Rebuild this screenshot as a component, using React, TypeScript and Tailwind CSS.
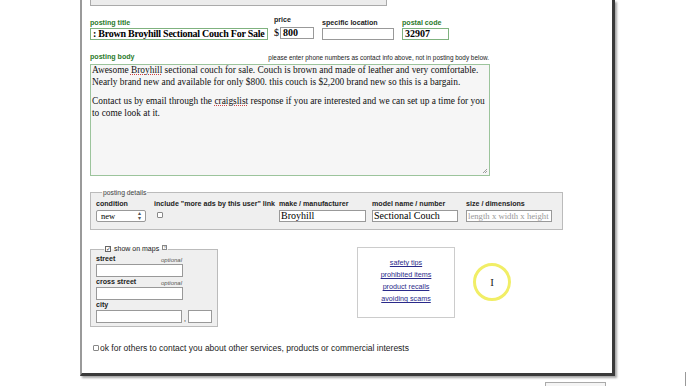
import React from "react";

const sans = { fontFamily: '"Liberation Sans", Arial, sans-serif' };
const serif = { fontFamily: '"Liberation Serif", "Times New Roman", serif' };

function Label({ children, green }: { children: React.ReactNode; green?: boolean }) {
  return (
    <div
      className={`text-[7.1px] font-bold leading-[9px] whitespace-nowrap ${green ? "text-[#2a7a2a]" : "text-[#222]"}`}
      style={sans}
    >
      {children}
    </div>
  );
}

function Box({
  w,
  green,
  children,
  cls = "",
  size = "text-[10px]",
  h = "h-[12px]",
}: {
  w: string;
  green?: boolean;
  children?: React.ReactNode;
  cls?: string;
  size?: string;
  h?: string;
}) {
  return (
    <div
      className={`${w} ${h} ${size} border ${green ? "border-[#7fb27f]" : "border-[#999]"} bg-white flex items-center leading-none overflow-hidden whitespace-nowrap ${cls}`}
      style={serif}
    >
      {children}
    </div>
  );
}

export default function App() {
  return (
    <div className="w-[686px] h-[386px] bg-white relative overflow-hidden" style={sans}>
      <div className="ml-[80px] w-[535px] h-[376px] bg-white border-l-2 border-l-[#9a9a9a] border-r-[3px] border-r-[#3a3a3a] border-b-[3px] border-b-[#3a3a3a] shadow-[2px_2px_2px_rgba(0,0,0,0.35)] pl-[8px] flex flex-col">
        {/* remnant of field above */}
        <div className="w-[297px] h-[6px] bg-[#ececec] border-x border-b border-[#aaa]" />

        {/* title row */}
        <div className="flex mt-[10px] items-end">
          <div className="flex flex-col">
            <Label green>posting title</Label>
            <Box w="w-[178px]" green cls="px-[2px] font-bold tracking-[-0.25px]">
              : Brown Broyhill Sectional Couch For Sale
            </Box>
          </div>
          <div className="flex flex-col ml-[6px]">
            <Label>price</Label>
            <div className="flex items-center text-[10px]" style={serif}>
              <span className="mr-[1px]">$</span>
              <Box w="w-[34px]" cls="px-[2px] font-bold">800</Box>
            </div>
          </div>
          <div className="flex flex-col ml-[8px]">
            <Label>specific location</Label>
            <Box w="w-[72px]" />
          </div>
          <div className="flex flex-col ml-[8px]">
            <Label green>postal code</Label>
            <Box w="w-[47px]" green cls="px-[2px] font-bold">32907</Box>
          </div>
        </div>

        {/* body */}
        <div className="w-[400px] mt-[13px] flex justify-between items-end">
          <Label green>posting body</Label>
          <div className="text-[6.4px] text-[#222] leading-[8px] pr-[1px]">
            please enter phone numbers as contact info above, not in posting body below.
          </div>
        </div>
        <div
          className="w-[400px] h-[112px] mt-[2px] border border-[#9cc49c] bg-[#f6f6f6] px-[1px] text-[9.4px] leading-[12px] text-[#111] relative"
          style={serif}
        >
          <p className="-mt-[1px]">
            Awesome <span className="underline decoration-dotted decoration-[#c44]">Broyhill</span> sectional couch for sale. Couch is brown and made of leather and very comfortable.
            Nearly brand new and available for only $800. this couch is $2,200 brand new so this is a bargain.
          </p>
          <p className="mt-[7px]">
            Contact us by email through the <span className="underline decoration-dotted decoration-[#c44]">craigslist</span> response if you are interested and we can set up a time for
            you to come look at it.
          </p>
          <svg className="absolute right-[1px] bottom-[1px]" width="6" height="6" viewBox="0 0 6 6">
            <path d="M5 1 L1 5 M5 3 L3 5" stroke="#888" strokeWidth="0.8" />
          </svg>
        </div>

        {/* posting details */}
        <fieldset className="w-[473px] h-[41px] mt-[13px] border border-[#bbb] bg-[#efefef] px-[5px] relative">
          <legend className="text-[6.8px] text-[#444] px-[1px] ml-[6px] leading-[7px]">posting details</legend>
          <div className="flex mt-[4px]">
            <div className="flex flex-col w-[58px]">
              <Label>condition</Label>
              <div
                className="w-[50px] h-[12px] mt-[1px] border border-[#999] rounded-[2px] bg-white flex items-center justify-between px-[4px] text-[8.5px]"
                style={serif}
              >
                <span>new</span>
                <span className="text-[6px] leading-[5px] flex flex-col text-[#555]" style={sans}>
                  <span>▴</span>
                  <span>▾</span>
                </span>
              </div>
            </div>
            <div className="flex flex-col w-[125px]">
              <Label>include "more ads by this user" link</Label>
              <div className="w-[6px] h-[6px] mt-[3px] ml-[3px] border border-[#888] rounded-[1px] bg-white" />
            </div>
            <div className="flex flex-col w-[93px]">
              <Label>make / manufacturer</Label>
              <Box w="w-[87px]" cls="mt-[1px] px-[1px]">Broyhill</Box>
            </div>
            <div className="flex flex-col w-[94px]">
              <Label>model name / number</Label>
              <Box w="w-[86px]" cls="mt-[1px] px-[1px]">Sectional Couch</Box>
            </div>
            <div className="flex flex-col">
              <Label>size / dimensions</Label>
              <Box w="w-[86px]" size="text-[8.7px]" cls="mt-[1px] px-[1px] text-[#999]">length x width x height</Box>
            </div>
          </div>
        </fieldset>

        {/* map + links */}
        <div className="flex mt-[17px]">
          <fieldset className="w-[128px] h-[82px] border border-[#bbb] bg-[#efefef] px-[5px] -mt-[2px]">
            <legend className="ml-[8px] px-[1px] flex items-center text-[7px] text-[#222] leading-[8px]">
              <span className="w-[6px] h-[6px] border border-[#666] bg-white mr-[3px] flex items-center justify-center text-[6px] leading-none text-[#334]">✓</span>
              show on maps
              <span className="ml-[3px] -mt-[4px] w-[5px] h-[5px] border border-[#888] text-[4px] leading-[4px] text-center text-[#555]">?</span>
            </legend>
            <div className="flex flex-col">
              <div className="w-[86px] flex justify-between items-end mt-[2px]">
                <Label>street</Label>
                <span className="text-[6px] text-[#555] leading-[8px] italic">optional</span>
              </div>
              <Box w="w-[87px]" h="h-[13px]" />
              <div className="w-[86px] flex justify-between items-end mt-[1px]">
                <Label>cross street</Label>
                <span className="text-[6px] text-[#555] leading-[8px] italic">optional</span>
              </div>
              <Box w="w-[87px]" h="h-[13px]" />
              <div className="mt-[1px]">
                <Label>city</Label>
              </div>
              <div className="flex items-end">
                <Box w="w-[86px]" h="h-[13px]" />
                <span className="text-[7px] mx-[2px] leading-[8px]">,</span>
                <Box w="w-[24px]" h="h-[13px]" />
              </div>
            </div>
          </fieldset>

          <div className="ml-[139px] w-[98px] h-[71px] border border-[#ccc] flex flex-col items-center pt-[10px] gap-[3px]">
            {["safety tips", "prohibited items", "product recalls", "avoiding scams"].map((t) => (
              <span key={t} className="text-[7.2px] leading-[9px] text-[#2a2a8a] underline">
                {t}
              </span>
            ))}
          </div>
        </div>

        {/* ok checkbox */}
        <div className="flex items-center mt-[16px] ml-[3px]">
          <div className="w-[6px] h-[6px] border border-[#888] rounded-[1px] bg-white mr-[1px]" />
          <span className="text-[8.5px] text-[#222] leading-[10px]">
            ok for others to contact you about other services, products or commercial interests
          </span>
        </div>
      </div>

      {/* button edge below panel */}
      <div className="absolute left-[545px] top-[382px] w-[61px] h-[10px] border border-[#aaa] bg-[#f5f5f5]" />
      {/* far right edge */}
      <div className="absolute left-[685px] top-[372px] w-[1px] h-[14px] bg-[#999]" />

      {/* cursor highlight */}
      <div className="absolute left-[473px] top-[263px] w-[38px] h-[38px] rounded-full border-[3px] border-[#f1ee66] flex items-center justify-center">
        <span className="text-[11px] leading-none text-[#222]" style={serif}>I</span>
      </div>
    </div>
  );
}
